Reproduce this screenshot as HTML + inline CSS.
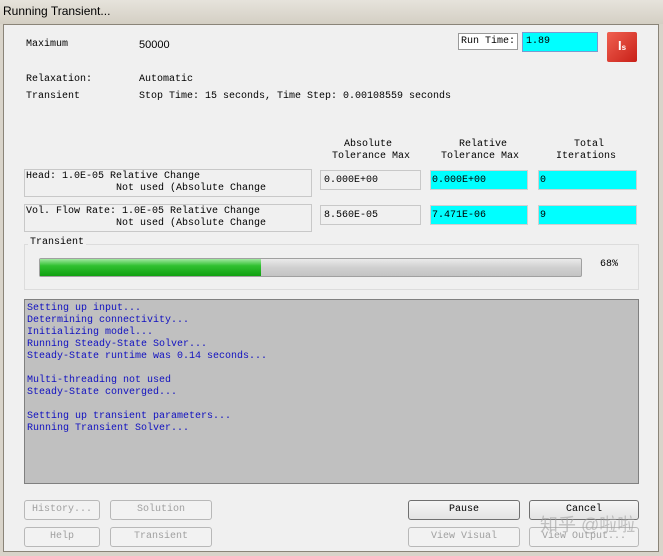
<!DOCTYPE html>
<html><head><style>
*{margin:0;padding:0;box-sizing:border-box}
body{width:663px;height:556px;position:relative;background:#d9d4ca;font-family:"Liberation Mono",monospace;font-size:10px;color:#000;overflow:hidden}
.a{position:absolute;white-space:pre;line-height:12px}
.title{position:absolute;left:0;top:0;width:663px;height:24px;background:linear-gradient(#e6e3dc,#d4cfc4);font-family:"Liberation Sans",sans-serif;font-size:12px;padding:4px 3px}
.win{position:absolute;left:3px;top:24px;width:656px;height:528px;background:#f0f0f0;border:1px solid #8a8478}
.box{position:absolute;border:1px solid #c8c8c8;background:#f0f0f0}
.cy{position:absolute;background:#00ffff;border:1px solid #d0d0d0}
.btn{position:absolute;border:1px solid #b8b8b8;border-radius:3px;background:#f2f2f2;color:#a0a0a0;text-align:center;line-height:18px;height:20px}
.en{border-color:#707070;color:#000;background:linear-gradient(#f6f6f6,#e4e4e4)}
.log{position:absolute;left:24px;top:299px;width:615px;height:185px;background:#c0c0c0;border:1px solid #808080;color:#1010c0;font-family:"Liberation Mono",monospace;padding:3px 2px}
</style></head><body>
<div class="title">Running Transient...</div>
<div class="win"></div>
<div class="a" style="left:26px;top:39px">Maximum</div>
<div class="a" style="left:139px;top:39px;font-family:'Liberation Sans',sans-serif;font-size:11px">50000</div>
<div class="a" style="left:26px;top:74px">Relaxation:</div>
<div class="a" style="left:139px;top:74px">Automatic</div>
<div class="a" style="left:26px;top:91px">Transient</div>
<div class="a" style="left:139px;top:91px">Stop Time: 15 seconds, Time Step: 0.00108559 seconds</div>
<div class="box" style="left:458px;top:33px;width:60px;height:17px;background:#fff;border-color:#999"></div>
<div class="a" style="left:461px;top:36px">Run Time:</div>
<div class="cy" style="left:522px;top:32px;width:76px;height:20px;border-color:#7a9ad0"></div>
<div class="a" style="left:526px;top:36px">1.89</div>
<div style="position:absolute;left:607px;top:32px;width:30px;height:30px;background:linear-gradient(135deg,#f06050,#c82018);border-radius:2px"></div>
<div class="a" style="left:618px;top:40px;color:#fff;font-weight:bold;font-size:13px;font-family:'Liberation Sans'">I<span style="font-size:8px">s</span></div>
<div class="a" style="left:332px;top:139px">  Absolute
Tolerance Max</div>
<div class="a" style="left:441px;top:139px">   Relative
Tolerance Max</div>
<div class="a" style="left:556px;top:139px">   Total
Iterations</div>
<div class="box" style="left:24px;top:169px;width:288px;height:28px"></div>
<div class="a" style="left:26px;top:171px">Head: 1.0E-05 Relative Change
               Not used (Absolute Change</div>
<div class="box" style="left:24px;top:204px;width:288px;height:28px"></div>
<div class="a" style="left:26px;top:206px">Vol. Flow Rate: 1.0E-05 Relative Change
               Not used (Absolute Change</div>
<div class="box" style="left:320px;top:170px;width:101px;height:20px"></div>
<div class="a" style="left:324px;top:175px">0.000E+00</div>
<div class="cy" style="left:430px;top:170px;width:98px;height:20px"></div>
<div class="a" style="left:432px;top:175px">0.000E+00</div>
<div class="cy" style="left:538px;top:170px;width:99px;height:20px"></div>
<div class="a" style="left:540px;top:175px">0</div>
<div class="box" style="left:320px;top:205px;width:101px;height:20px"></div>
<div class="a" style="left:324px;top:210px">8.560E-05</div>
<div class="cy" style="left:430px;top:205px;width:98px;height:20px"></div>
<div class="a" style="left:432px;top:210px">7.471E-06</div>
<div class="cy" style="left:538px;top:205px;width:99px;height:20px"></div>
<div class="a" style="left:540px;top:210px">9</div>
<div class="box" style="left:24px;top:244px;width:615px;height:46px;border-color:#dcdcdc"></div>
<div class="a" style="left:28px;top:237px;background:#f0f0f0;padding:0 2px">Transient</div>
<div style="position:absolute;left:39px;top:258px;width:543px;height:19px;border:1px solid #a0a0a0;border-radius:2px;background:linear-gradient(#eaeaea,#d0d0d0 50%,#c4c4c4)"></div>
<div style="position:absolute;left:40px;top:259px;width:221px;height:17px;background:linear-gradient(#a0e8a0,#30c030 40%,#10a010)"></div>
<div class="a" style="left:600px;top:259px">68%</div>
<div class="log"><div class="a" style="position:static">Setting up input...
Determining connectivity...
Initializing model...
Running Steady-State Solver...
Steady-State runtime was 0.14 seconds...

Multi-threading not used
Steady-State converged...

Setting up transient parameters...
Running Transient Solver...</div></div>
<div class="btn" style="left:24px;top:500px;width:76px">History...</div>
<div class="btn" style="left:110px;top:500px;width:102px">Solution</div>
<div class="btn" style="left:24px;top:527px;width:76px">Help</div>
<div class="btn" style="left:110px;top:527px;width:102px">Transient</div>
<div class="btn en" style="left:408px;top:500px;width:112px">Pause</div>
<div class="btn en" style="left:529px;top:500px;width:110px">Cancel</div>
<div class="btn" style="left:408px;top:527px;width:112px">View Visual</div>
<div class="btn" style="left:529px;top:527px;width:110px">View Output...</div>
<div class="a" style="left:540px;top:514px;color:rgba(160,160,160,0.6);font-size:18px;line-height:22px;font-family:'Liberation Sans','Noto Sans CJK SC',sans-serif">知乎 @啦啦</div>
</body></html>
